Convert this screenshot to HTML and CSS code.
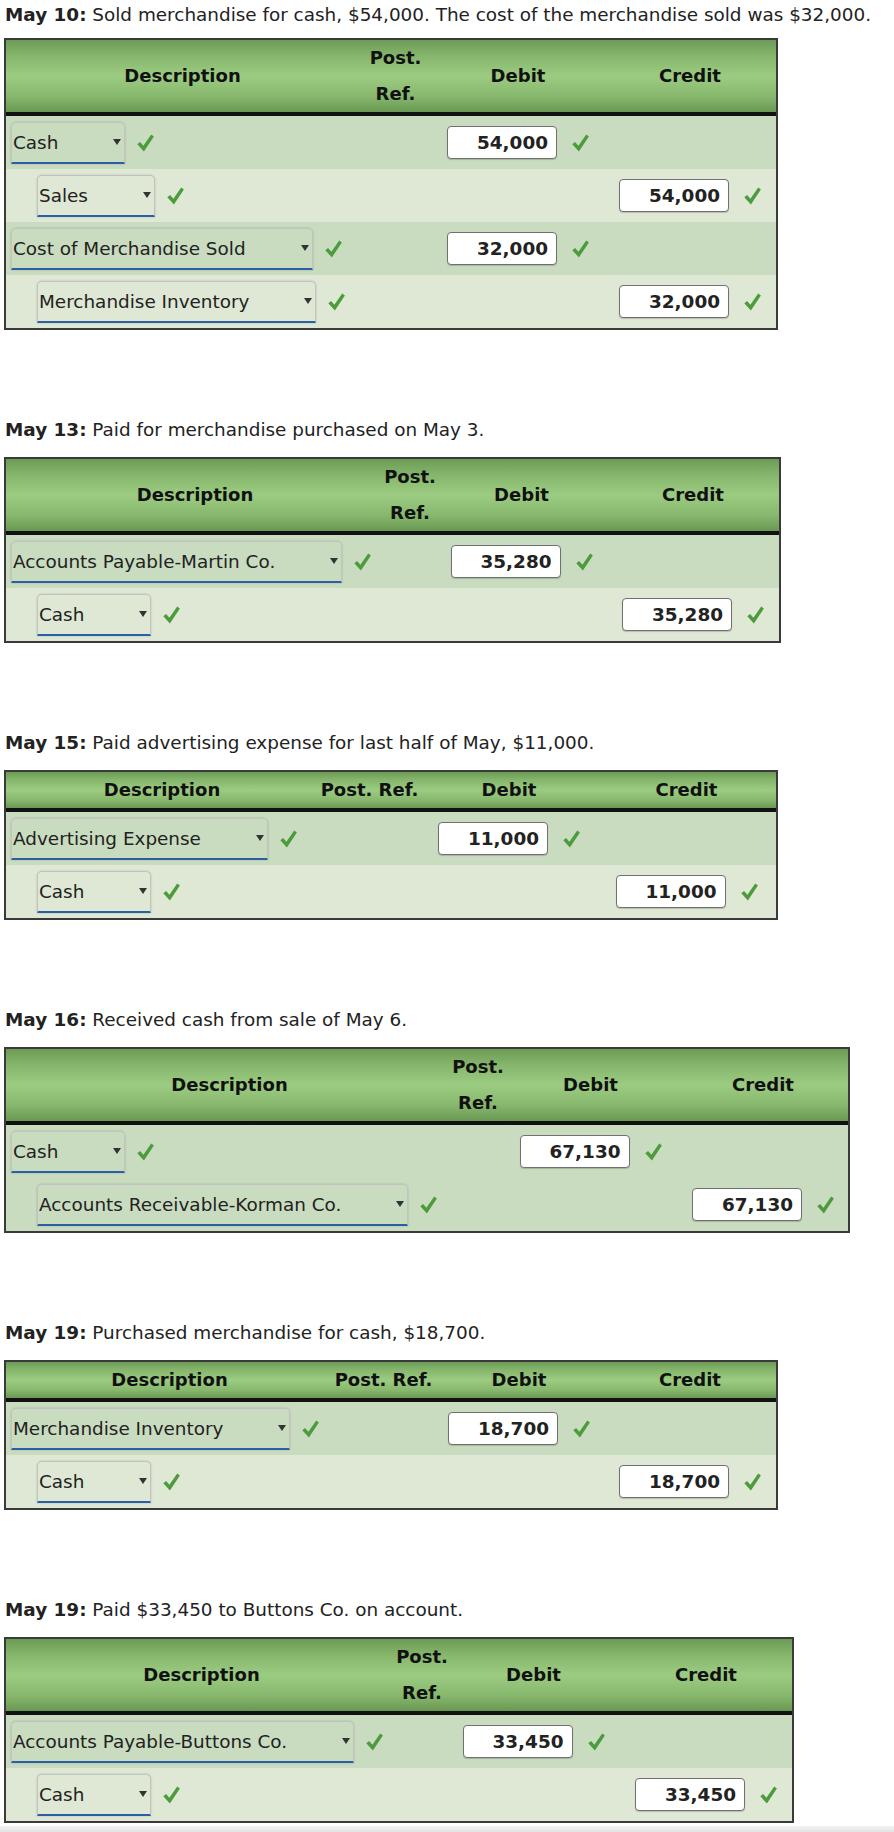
FILE: index.html
```html
<!DOCTYPE html>
<html lang="en">
<head>
<meta charset="utf-8">
<title>Journal entries</title>
<link rel="stylesheet" href="styles.css">
</head>
<body>
<svg width="0" height="0" class="defs" aria-hidden="true">
  <defs>
    <symbol id="ok" viewBox="0 0 17 18">
      <path d="M0.3 10.3 L3.1 8.1 L6.4 11.7 L14.2 0.5 L16.9 2.4 L6.9 17.4 Z" fill="#4c9b3c"/>
    </symbol>
  </defs>
</svg>

<section class="entry">
  <p class="entry-title"><b>May 10:</b> Sold merchandise for cash, $54,000. The cost of the merchandise sold was $32,000.</p>
  <div class="journal j1">
    <div class="jhead">
      <div class="hc">Description</div>
      <div class="hc">Post. Ref.</div>
      <div class="hc">Debit</div>
      <div class="hc">Credit</div>
    </div>
    <div class="jrow">
      <div class="dc"><span class="select">Cash<i class="arrow"></i></span><svg class="check"><use href="#ok"/></svg></div>
      <div class="pc"></div>
      <div class="amt"><span class="input">54,000</span><svg class="check"><use href="#ok"/></svg></div>
      <div class="amt"></div>
    </div>
    <div class="jrow alt">
      <div class="dc sub"><span class="select">Sales<i class="arrow"></i></span><svg class="check"><use href="#ok"/></svg></div>
      <div class="pc"></div>
      <div class="amt"></div>
      <div class="amt"><span class="input">54,000</span><svg class="check"><use href="#ok"/></svg></div>
    </div>
    <div class="jrow">
      <div class="dc"><span class="select">Cost of Merchandise Sold<i class="arrow"></i></span><svg class="check"><use href="#ok"/></svg></div>
      <div class="pc"></div>
      <div class="amt"><span class="input">32,000</span><svg class="check"><use href="#ok"/></svg></div>
      <div class="amt"></div>
    </div>
    <div class="jrow alt">
      <div class="dc sub"><span class="select">Merchandise Inventory<i class="arrow"></i></span><svg class="check"><use href="#ok"/></svg></div>
      <div class="pc"></div>
      <div class="amt"></div>
      <div class="amt"><span class="input">32,000</span><svg class="check"><use href="#ok"/></svg></div>
    </div>
  </div>
</section>

<section class="entry">
  <p class="entry-title"><b>May 13:</b> Paid for merchandise purchased on May 3.</p>
  <div class="journal j2">
    <div class="jhead">
      <div class="hc">Description</div>
      <div class="hc">Post. Ref.</div>
      <div class="hc">Debit</div>
      <div class="hc">Credit</div>
    </div>
    <div class="jrow">
      <div class="dc"><span class="select">Accounts Payable-Martin Co.<i class="arrow"></i></span><svg class="check"><use href="#ok"/></svg></div>
      <div class="pc"></div>
      <div class="amt"><span class="input">35,280</span><svg class="check"><use href="#ok"/></svg></div>
      <div class="amt"></div>
    </div>
    <div class="jrow alt">
      <div class="dc sub"><span class="select">Cash<i class="arrow"></i></span><svg class="check"><use href="#ok"/></svg></div>
      <div class="pc"></div>
      <div class="amt"></div>
      <div class="amt"><span class="input">35,280</span><svg class="check"><use href="#ok"/></svg></div>
    </div>
  </div>
</section>

<section class="entry">
  <p class="entry-title"><b>May 15:</b> Paid advertising expense for last half of May, $11,000.</p>
  <div class="journal j3">
    <div class="jhead">
      <div class="hc">Description</div>
      <div class="hc">Post. Ref.</div>
      <div class="hc">Debit</div>
      <div class="hc">Credit</div>
    </div>
    <div class="jrow">
      <div class="dc"><span class="select">Advertising Expense<i class="arrow"></i></span><svg class="check"><use href="#ok"/></svg></div>
      <div class="pc"></div>
      <div class="amt"><span class="input">11,000</span><svg class="check"><use href="#ok"/></svg></div>
      <div class="amt"></div>
    </div>
    <div class="jrow alt">
      <div class="dc sub"><span class="select">Cash<i class="arrow"></i></span><svg class="check"><use href="#ok"/></svg></div>
      <div class="pc"></div>
      <div class="amt"></div>
      <div class="amt"><span class="input">11,000</span><svg class="check"><use href="#ok"/></svg></div>
    </div>
  </div>
</section>

<section class="entry">
  <p class="entry-title"><b>May 16:</b> Received cash from sale of May 6.</p>
  <div class="journal j4">
    <div class="jhead">
      <div class="hc">Description</div>
      <div class="hc">Post. Ref.</div>
      <div class="hc">Debit</div>
      <div class="hc">Credit</div>
    </div>
    <div class="jrow">
      <div class="dc"><span class="select">Cash<i class="arrow"></i></span><svg class="check"><use href="#ok"/></svg></div>
      <div class="pc"></div>
      <div class="amt"><span class="input">67,130</span><svg class="check"><use href="#ok"/></svg></div>
      <div class="amt"></div>
    </div>
    <div class="jrow">
      <div class="dc sub"><span class="select">Accounts Receivable-Korman Co.<i class="arrow"></i></span><svg class="check"><use href="#ok"/></svg></div>
      <div class="pc"></div>
      <div class="amt"></div>
      <div class="amt"><span class="input">67,130</span><svg class="check"><use href="#ok"/></svg></div>
    </div>
  </div>
</section>

<section class="entry">
  <p class="entry-title"><b>May 19:</b> Purchased merchandise for cash, $18,700.</p>
  <div class="journal j5">
    <div class="jhead">
      <div class="hc">Description</div>
      <div class="hc">Post. Ref.</div>
      <div class="hc">Debit</div>
      <div class="hc">Credit</div>
    </div>
    <div class="jrow">
      <div class="dc"><span class="select">Merchandise Inventory<i class="arrow"></i></span><svg class="check"><use href="#ok"/></svg></div>
      <div class="pc"></div>
      <div class="amt"><span class="input">18,700</span><svg class="check"><use href="#ok"/></svg></div>
      <div class="amt"></div>
    </div>
    <div class="jrow alt">
      <div class="dc sub"><span class="select">Cash<i class="arrow"></i></span><svg class="check"><use href="#ok"/></svg></div>
      <div class="pc"></div>
      <div class="amt"></div>
      <div class="amt"><span class="input">18,700</span><svg class="check"><use href="#ok"/></svg></div>
    </div>
  </div>
</section>

<section class="entry">
  <p class="entry-title"><b>May 19:</b> Paid $33,450 to Buttons Co. on account.</p>
  <div class="journal j6">
    <div class="jhead">
      <div class="hc">Description</div>
      <div class="hc">Post. Ref.</div>
      <div class="hc">Debit</div>
      <div class="hc">Credit</div>
    </div>
    <div class="jrow">
      <div class="dc"><span class="select">Accounts Payable-Buttons Co.<i class="arrow"></i></span><svg class="check"><use href="#ok"/></svg></div>
      <div class="pc"></div>
      <div class="amt"><span class="input">33,450</span><svg class="check"><use href="#ok"/></svg></div>
      <div class="amt"></div>
    </div>
    <div class="jrow alt">
      <div class="dc sub"><span class="select">Cash<i class="arrow"></i></span><svg class="check"><use href="#ok"/></svg></div>
      <div class="pc"></div>
      <div class="amt"></div>
      <div class="amt"><span class="input">33,450</span><svg class="check"><use href="#ok"/></svg></div>
    </div>
  </div>
</section>

<div class="page-end"></div>
</body>
</html>
```

FILE: styles.css
```css
* { box-sizing: border-box; }

html, body {
  margin: 0;
  padding: 0;
  background: #ffffff;
}

body {
  width: 894px;
  padding: 4px 0 0 4px;
  font-family: "DejaVu Sans", Verdana, sans-serif;
  font-size: 18.4px;
  color: #222222;
  overflow: hidden;
}

.defs { position: absolute; width: 0; height: 0; }

.entry { margin-bottom: 89px; }
.entry:last-of-type { margin-bottom: 3px; }

.entry-title {
  margin: 0 0 16px 1px;
  line-height: 22px;
  font-size: 18.4px;
  color: #222222;
}
.entry:first-of-type .entry-title { margin-bottom: 12px; }

.journal {
  width: max-content;
  border: 2px solid #3a3a3a;
}

.j1 { --cols: 353px 73px 172px 172px; }
.j2 { --cols: 378px 52px 171px 172px; }
.j3 { --cols: 312px 103px 176px 179px; }
.j4 { --cols: 447px 50px 175px 170px; }
.j5 { --cols: 327px 101px 170px 172px; }
.j6 { --cols: 391px 50px 173px 172px; }

.jhead, .jrow {
  display: grid;
  grid-template-columns: var(--cols);
}

.jhead {
  background: linear-gradient(to bottom, #6c9b56 0%, #86b66c 22%, #9ccb82 50%, #88b86e 78%, #699852 100%);
  border-bottom: 4px solid #111111;
}

.hc {
  display: flex;
  align-items: center;
  justify-content: center;
  text-align: center;
  font-size: 18px;
  font-weight: bold;
  line-height: 36px;
  color: #111111;
}

.jrow {
  height: 53px;
  background: #c9dcc0;
}
.jrow.alt { background: #dfe8d4; }

.dc {
  display: flex;
  align-items: center;
  gap: 12px;
  padding-left: 5px;
}
.dc.sub { padding-left: 31px; }

.amt {
  display: flex;
  align-items: center;
  justify-content: center;
  gap: 15px;
}

.select {
  display: inline-flex;
  align-items: center;
  height: 42px;
  padding: 0 3px 0 1px;
  border: 1px solid #c2c2c2;
  border-bottom: 2px solid #2a5fa5;
  border-radius: 5px 5px 0 0;
  box-shadow: 0 0 2px rgba(0, 0, 0, 0.22);
  white-space: nowrap;
  color: #222222;
}

.select .arrow {
  margin-left: 55px;
  width: 0;
  height: 0;
  border-left: 4.5px solid transparent;
  border-right: 4.5px solid transparent;
  border-top: 6px solid #333333;
}

.input {
  display: block;
  width: 110px;
  height: 33px;
  padding-right: 8px;
  background: #ffffff;
  border: 1px solid #707070;
  border-radius: 4px;
  box-shadow: 0 1px 1px rgba(0, 0, 0, 0.18);
  font-weight: bold;
  line-height: 31px;
  text-align: right;
  color: #222222;
}

.check {
  width: 17px;
  height: 18px;
  flex: none;
}

.page-end {
  height: 6px;
  margin-left: -4px;
  background: linear-gradient(to bottom, #f3f3f3, #e2e2e2);
}
```
